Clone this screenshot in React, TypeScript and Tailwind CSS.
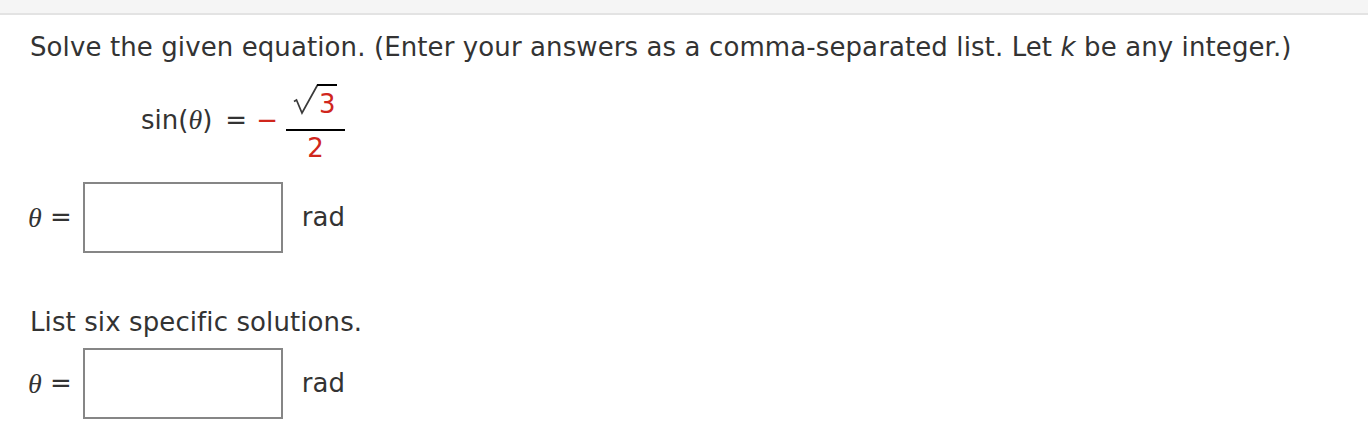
const red = 'text-[#d0261c]';

function Radical() {
  return (
    <svg width="30" height="34" viewBox="0 0 30 34" className="shrink-0 mt-[2px]">
      <path d="M4 19.5 L6.5 18 L12 31 L27.5 3" fill="none" stroke="#3a3a3a" strokeWidth="1.7" strokeLinejoin="miter" />
    </svg>
  );
}

function AnswerRow({ className }: { className: string }) {
  return (
    <div className={`flex items-center text-[26px] ${className}`}>
      <span className="w-[20px] -ml-[2px] font-['Liberation_Serif',serif] italic text-[28px] leading-none">θ</span>
      <span className="ml-[2px]">=</span>
      <div className="ml-[11px] w-[200px] h-[71px] border-2 border-[#868686] bg-white" />
      <span className="ml-[19px]">rad</span>
    </div>
  );
}

export default function App() {
  return (
    <div className="w-[1368px] h-[430px] bg-white overflow-hidden text-[#333] font-['DejaVu_Sans',Verdana,sans-serif]">
      <div className="h-[15px] bg-[#f5f5f5] border-b-2 border-[#e3e3e3]" />
      <div className="pl-[30px] pt-[16px]">
        <p className="text-[26px] leading-[32px] tracking-[0.1px]">
          Solve the given equation. (Enter your answers as a comma-separated list. Let <i>k</i> be any integer.)
        </p>

        {/* equation */}
        <div className="flex items-start mt-[17px] pl-[111px] text-[26px] leading-[32px]">
          <div className="flex items-center mt-[24px]">
            <span>
              sin(<i className="font-['Liberation_Serif',serif] text-[28px]">θ</i>)
            </span>
            <span className="ml-[13px]">=</span>
            <span className={`ml-[9px] ${red}`}>−</span>
          </div>
          <div className="ml-[8px] flex flex-col items-center w-[59px]">
            <div className="flex items-start h-[49px] w-full pl-[4px]">
              <Radical />
              <span className={`${red} -ml-[3px] mt-[4px] leading-[26px] border-t-2 border-black pl-[2px] pr-[2px] pt-[5px]`}>3</span>
            </div>
            <div className="w-full h-[2px] bg-black" />
            <span className={`${red} mt-[2px] leading-[30px]`}>2</span>
          </div>
        </div>

        <AnswerRow className="mt-[19px]" />

        <p className="mt-[53px] text-[26px] leading-[32px] tracking-[0.1px]">List six specific solutions.</p>

        <AnswerRow className="mt-[10px]" />
      </div>
    </div>
  );
}
